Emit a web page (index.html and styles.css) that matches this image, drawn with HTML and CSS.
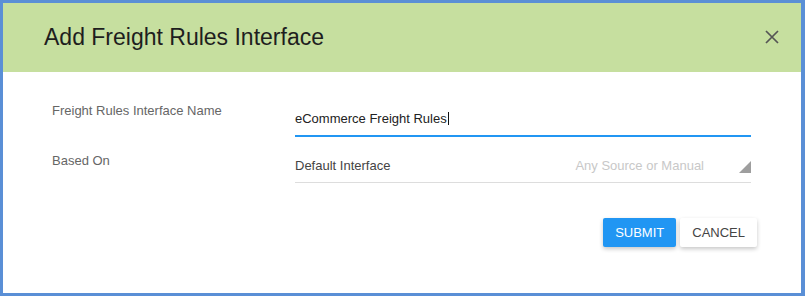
FILE: index.html
```html
<!DOCTYPE html>
<html lang="en">
<head>
    <meta charset="UTF-8">
    <meta name="viewport" content="width=device-width, initial-scale=1.0">
    <title>Add Freight Rules Interface</title>
    <link rel="stylesheet" href="styles.css">
</head>
<body>
    <div class="dialog">
        <div class="dialog-header">
            <h1>Add Freight Rules Interface</h1>
            <button class="close-btn" title="Close">
                <svg width="14" height="14" viewBox="0 0 14 14">
                    <path d="M1 1 L13 13 M13 1 L1 13" stroke="#555" stroke-width="1.7" fill="none" />
                </svg>
            </button>
        </div>

        <div class="dialog-body">
            <div class="form-grid">
                <label class="form-label">Freight Rules Interface Name</label>
                <div class="field field-text focused">eCommerce Freight Rules<span class="caret"></span></div>

                <label class="form-label">Based On</label>
                <div class="field field-select">
                    <span class="select-value">Default Interface</span>
                    <span class="select-hint">Any Source or Manual</span>
                    <svg class="select-arrow" width="12" height="12" viewBox="0 0 12 12">
                        <polygon points="12,0 12,12 0,12" fill="#9e9e9e" />
                    </svg>
                </div>
            </div>

            <div class="actions">
                <button class="btn btn-primary">Submit</button>
                <button class="btn btn-default">Cancel</button>
            </div>
        </div>
    </div>
</body>
</html>
```

FILE: styles.css
```css
html, body {
    margin: 0;
    padding: 0;
    background: #fff;
}
body {
    font-family: "Liberation Sans", Arial, sans-serif;
}
.dialog {
    box-sizing: border-box;
    width: 805px;
    height: 296px;
    border-style: solid;
    border-color: #5a8fd6;
    border-width: 3px 4px 3px 3px;
    background: #fff;
}
.dialog-header {
    height: 69px;
    box-sizing: border-box;
    padding: 0 22px 2px 41px;
    background: #c6df9f;
    display: flex;
    align-items: center;
    justify-content: space-between;
}
.dialog-header h1 {
    margin: 0;
    font-size: 23px;
    line-height: 26px;
    font-weight: normal;
    color: #1e1e1e;
}
.close-btn {
    border: none;
    background: none;
    padding: 0;
    width: 14px;
    height: 14px;
    cursor: pointer;
}
.close-btn svg {
    display: block;
}
.dialog-body {
    padding: 30px 50px 0 49px;
}
.form-grid {
    display: grid;
    grid-template-columns: 243px 1fr;
    row-gap: 15px;
    align-items: start;
}
.form-label {
    font-size: 13px;
    line-height: 16px;
    padding-top: 1px;
    color: #666;
}
.field {
    box-sizing: border-box;
    padding: 6px 0 8px 0;
    font-size: 13px;
    line-height: 16px;
    border-bottom: 1px solid #ddd;
}
.field-text {
    margin-top: 3px;
    color: #222;
}
.field-text.focused {
    border-bottom: 2px solid #2196f3;
}
.caret {
    display: inline-block;
    width: 1px;
    height: 13px;
    margin-left: 1px;
    vertical-align: -2px;
    background: #111;
}
.field-select {
    display: flex;
    align-items: flex-start;
}
.select-value {
    flex: 1;
    color: #444;
}
.select-hint {
    color: #c8c8c8;
    margin-right: 35px;
}
.select-arrow {
    display: block;
    margin-top: 3px;
}
.actions {
    display: flex;
    justify-content: flex-end;
    gap: 4px;
    margin-top: 35px;
    margin-right: -6px;
}
.btn {
    height: 29px;
    border: none;
    border-radius: 2px;
    font-family: "Liberation Sans", Arial, sans-serif;
    font-size: 13px;
    text-transform: uppercase;
    cursor: pointer;
    box-shadow: 0 2px 4px rgba(0, 0, 0, 0.22);
}
.btn-primary {
    padding: 0 12px;
    background: #2196f3;
    color: #fff;
}
.btn-default {
    padding: 0 12px;
    background: #fff;
    color: #444;
}
```
